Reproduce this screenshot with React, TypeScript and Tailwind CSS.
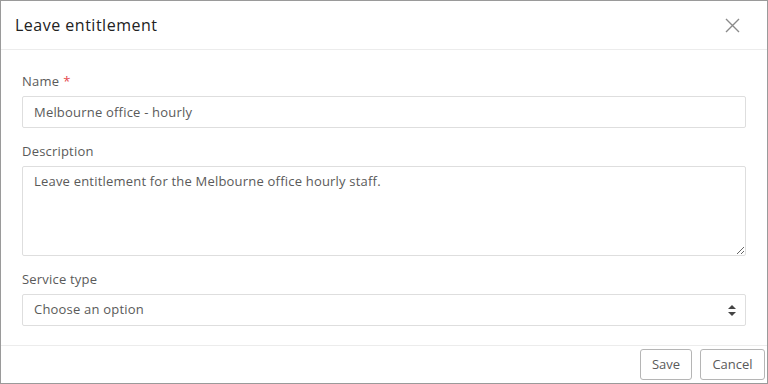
import React from "react";

const font = { fontFamily: "'Open Sans', Lato, sans-serif" };

function Label({ text, required = false }: { text: string; required?: boolean }) {
  return (
    <div className="text-[13px] text-[#5a5a5a] leading-4 mb-[7px] tracking-[0.2px]">
      {text}
      {required && <span className="text-[#e5484d] ml-1">*</span>}
    </div>
  );
}

export default function App() {
  return (
    <div style={font} className="w-[768px] h-[384px] bg-white border border-[#9a9a9a] flex flex-col overflow-hidden">
      {/* Header */}
      <div className="h-[49px] border-b border-[#ececec] flex items-center justify-between pl-[14px] pr-[27px] shrink-0">
        <h1 className="text-[16px] text-[#222] tracking-[0.5px]">Leave entitlement</h1>
        <svg width="15" height="15" viewBox="0 0 15 15">
          <path d="M1 1 L14 14 M14 1 L1 14" stroke="#8a8a8a" strokeWidth="1.4" />
        </svg>
      </div>

      {/* Body */}
      <div className="flex-1 px-[21px] pt-[23px]">
        <Label text="Name" required />
        <input
          className="block w-full h-[32px] border border-[#dedede] rounded-[2px] px-[11px] text-[13px] text-[#5a5a5a] tracking-[0.2px] outline-none"
          defaultValue="Melbourne office - hourly"
        />

        <div className="mt-[15px]">
          <Label text="Description" />
          <textarea
            className="block w-full h-[90px] border border-[#dedede] rounded-[2px] px-[11px] py-[5px] text-[13px] text-[#5a5a5a] tracking-[0.2px] outline-none"
            defaultValue="Leave entitlement for the Melbourne office hourly staff."
          />
        </div>

        <div className="mt-[15px]">
          <Label text="Service type" />
          <div className="w-full h-[32px] border border-[#dedede] rounded-[2px] px-[11px] flex items-center justify-between text-[13px] text-[#5a5a5a] tracking-[0.2px]">
            <span>Choose an option</span>
            <svg width="8" height="11" viewBox="0 0 8 11" className="mr-[-2px]">
              <path d="M4 0 L8 4 L0 4 Z" fill="#444" />
              <path d="M4 11 L8 7 L0 7 Z" fill="#444" />
            </svg>
          </div>
        </div>
      </div>

      {/* Footer */}
      <div className="h-[38px] border-t border-[#ececec] flex items-start justify-end gap-[8px] pr-[2px] pt-[3px] shrink-0">
        <button className="w-[52px] h-[31px] border border-[#b5b5b5] rounded-[3px] text-[13px] text-[#5a5a5a] bg-white">
          Save
        </button>
        <button className="w-[65px] h-[31px] border border-[#b5b5b5] rounded-[3px] text-[13px] text-[#5a5a5a] bg-white">
          Cancel
        </button>
      </div>
    </div>
  );
}
